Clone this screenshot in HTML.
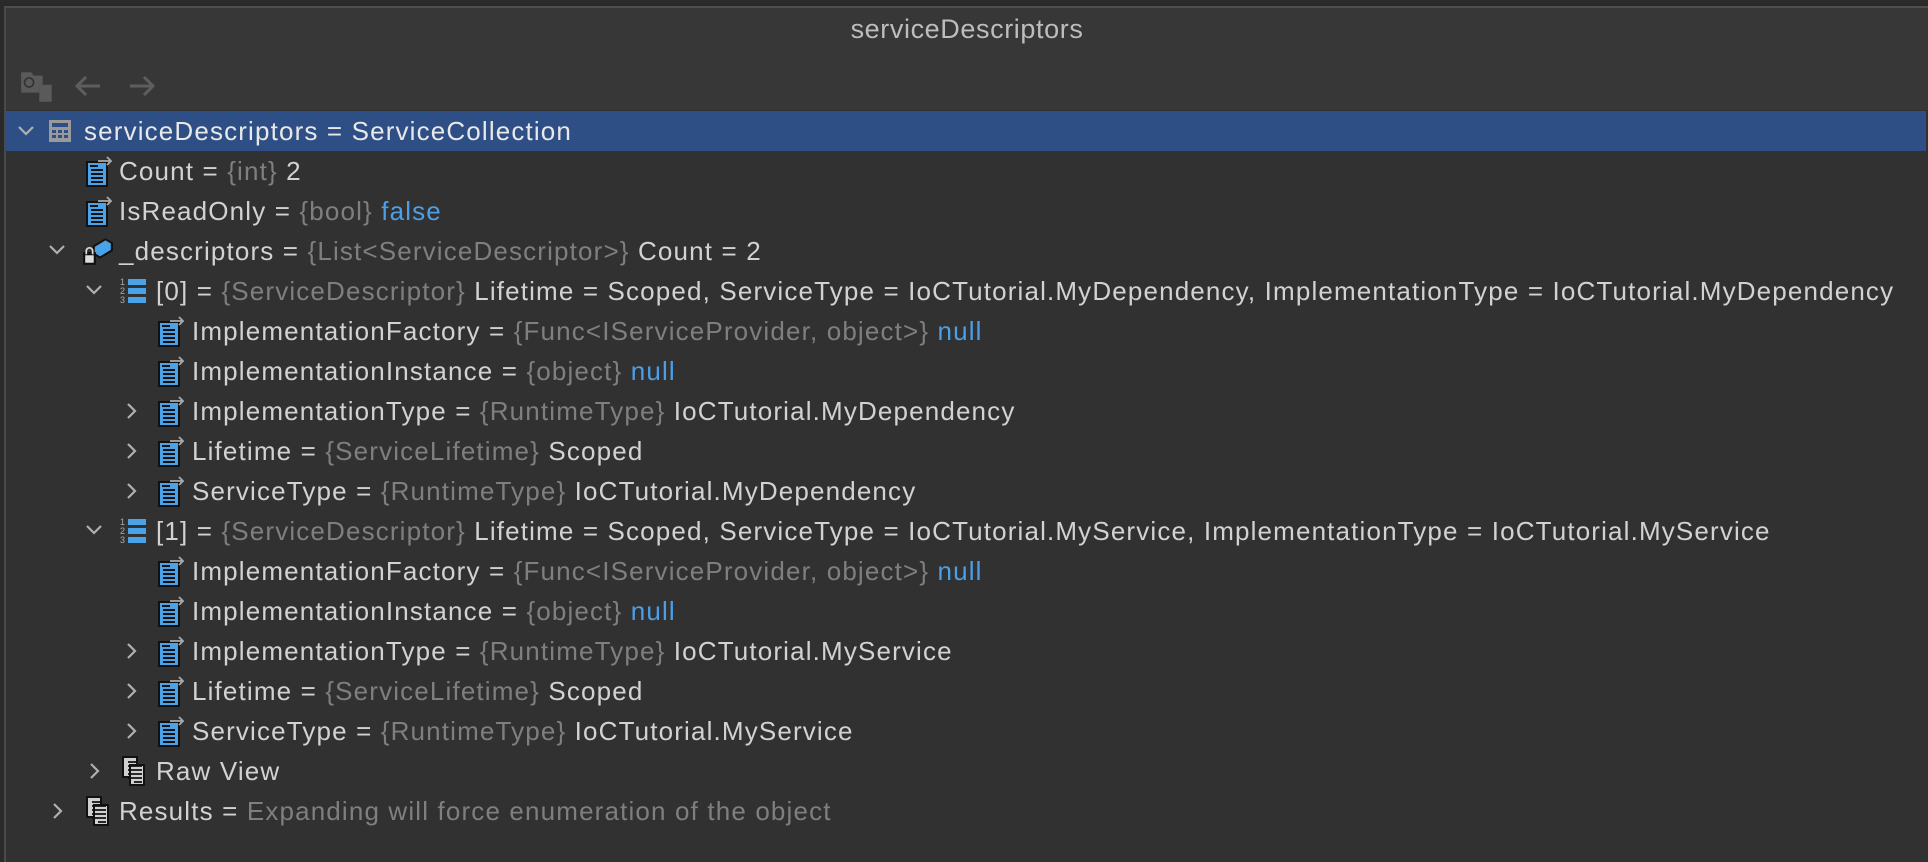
<!DOCTYPE html>
<html><head><meta charset="utf-8"><style>
html,body{margin:0;padding:0;width:1928px;height:862px;overflow:hidden;background:#2a2a2a;}
body{font-family:"Liberation Sans",sans-serif;position:relative;}
#win{position:absolute;left:4px;top:6px;right:0;bottom:0;background:#313131;border-left:2px solid #4a4a4a;border-top:2px solid #4e4e4e;}
#hdr{position:absolute;left:0;top:0;right:0;height:102px;background:#373737;}
#title{position:absolute;left:0;right:0;top:6px;text-align:center;color:#bdbdbd;font-size:27px;letter-spacing:0.6px;}
.row{position:absolute;left:2px;right:2px;height:40px;font-size:26px;line-height:40px;color:#d2d2d2;white-space:nowrap;letter-spacing:1.15px;}
.sel{background:#2e4f85;color:#e8e8e8;}
.t{color:#7f7f7f}.b{color:#4c9fe6}
.chev{position:absolute;top:13px;}
.ic{position:absolute;top:4px;}
.tx{position:absolute;top:0;}
</style></head><body>
<div id="win">
<div id="hdr">
<div id="title">serviceDescriptors</div>
<svg style="position:absolute;left:14px;top:62px" width="34" height="34" viewBox="0 0 30 30"><path d="M1 2h9l2 3h8v8H17v7H1z" fill="#5a5a5a"/><circle cx="8" cy="11" r="4" fill="none" stroke="#333" stroke-width="1.5"/><rect x="17" y="13" width="11" height="15" fill="#5a5a5a"/></svg>
<svg style="position:absolute;left:68px;top:67px" width="28" height="22" viewBox="0 0 28 22"><path d="M26 11H3M12 2L3 11l9 9" fill="none" stroke="#5e5e5e" stroke-width="3"/></svg>
<svg style="position:absolute;left:122px;top:67px" width="28" height="22" viewBox="0 0 28 22"><path d="M2 11h23M16 2l9 9-9 9" fill="none" stroke="#5e5e5e" stroke-width="3"/></svg>
</div>
</div>
<svg width="0" height="0" style="position:absolute">
<defs>
<symbol id="prop" viewBox="0 0 28 32"><rect x="0" y="6" width="22" height="26" fill="#111"/><rect x="2" y="8" width="18" height="22" fill="#4aa3e8"/><rect x="4" y="10" width="8" height="2" fill="#111"/><path d="M5 15h12M5 19h12M5 23h12M5 27h12" stroke="#111" stroke-width="2"/><path d="M12 6h13M21 2l4 4-4 4" fill="none" stroke="#aaa" stroke-width="1.8"/></symbol>
<symbol id="chd" viewBox="0 0 18 12"><path d="M2 2l7 7 7-7" fill="none" stroke="#b0b0b0" stroke-width="2.2"/></symbol>
<symbol id="chr" viewBox="0 0 12 18"><path d="M2 2l7 7-7 7" fill="none" stroke="#b0b0b0" stroke-width="2.2"/></symbol>
<symbol id="arr" viewBox="0 0 28 28"><text x="0" y="8" font-size="9" fill="#aaa" font-family="Liberation Sans">1</text><text x="0" y="17" font-size="9" fill="#aaa" font-family="Liberation Sans">2</text><text x="0" y="26" font-size="9" fill="#aaa" font-family="Liberation Sans">3</text><rect x="8" y="2" width="18" height="6" fill="#4aa3e8"/><rect x="8" y="11" width="18" height="6" fill="#4aa3e8"/><rect x="8" y="20" width="18" height="6" fill="#4aa3e8"/></symbol>
<symbol id="raw" viewBox="0 0 28 32"><rect x="2" y="1" width="16" height="22" fill="#111"/><rect x="4" y="3" width="12" height="18" fill="#d0d0d0"/><rect x="9" y="9" width="16" height="22" fill="#111"/><rect x="11" y="11" width="12" height="18" fill="#d0d0d0"/><path d="M8 7h10M8 11h14M8 15h14M8 19h14M8 23h14M14 27h8" stroke="#111" stroke-width="1.8"/></symbol>
</defs></svg>

<div class="row sel" style="top:111px;left:6px;right:2px">
<svg class="chev" style="left:11px;top:14px" width="18" height="12"><use href="#chd"/></svg>
<svg class="ic" style="left:42px;top:8px" width="24" height="24" viewBox="0 0 24 24"><rect x="1" y="1" width="22" height="22" fill="#9a9a9a"/><rect x="4" y="4" width="16" height="4" fill="#2e4f85"/><path d="M4 11h4v3H4zM10 11h4v3h-4zM16 11h4v3h-4zM4 16h4v3H4zM10 16h4v3h-4zM16 16h4v3h-4z" fill="#2e4f85"/></svg>
<span class="tx" style="left:78px">serviceDescriptors = ServiceCollection</span></div>

<div class="row" style="top:151px"><svg class="ic" style="left:84px" width="28" height="32"><use href="#prop"/></svg><span class="tx" style="left:117px">Count = <span class="t">{int}</span> 2</span></div>
<div class="row" style="top:191px"><svg class="ic" style="left:84px" width="28" height="32"><use href="#prop"/></svg><span class="tx" style="left:117px">IsReadOnly = <span class="t">{bool}</span> <span class="b">false</span></span></div>
<div class="row" style="top:231px"><svg class="chev" style="left:46px" width="18" height="12"><use href="#chd"/></svg>
<svg class="ic" style="left:80px;top:5px" width="32" height="30" viewBox="0 0 30 28"><path d="M10 9l12-7 7 4v8l-12 7-7-4z" fill="#111"/><path d="M12 10l10-6 5 3v6l-10 6-5-3z" fill="#4aa3e8"/><rect x="1" y="15" width="12" height="12" fill="#111"/><rect x="3" y="18" width="8" height="7" fill="#ddd"/><path d="M4 17v-3a3 3 0 0 1 6 0v3" fill="none" stroke="#ddd" stroke-width="1.6"/></svg>
<span class="tx" style="left:117px">_descriptors = <span class="t">{List&lt;ServiceDescriptor&gt;}</span> Count = 2</span></div>

<div class="row" style="top:271px"><svg class="chev" style="left:83px" width="18" height="12"><use href="#chd"/></svg><svg class="ic" style="left:118px;top:6px" width="28" height="28"><use href="#arr"/></svg><span class="tx" style="left:154px">[0] = <span class="t">{ServiceDescriptor}</span> Lifetime = Scoped, ServiceType = IoCTutorial.MyDependency, ImplementationType = IoCTutorial.MyDependency</span></div>
<div class="row" style="top:311px"><svg class="ic" style="left:156px" width="28" height="32"><use href="#prop"/></svg><span class="tx" style="left:190px">ImplementationFactory = <span class="t">{Func&lt;IServiceProvider, object&gt;}</span> <span class="b">null</span></span></div>
<div class="row" style="top:351px"><svg class="ic" style="left:156px" width="28" height="32"><use href="#prop"/></svg><span class="tx" style="left:190px">ImplementationInstance = <span class="t">{object}</span> <span class="b">null</span></span></div>
<div class="row" style="top:391px"><svg class="chev" style="left:124px;top:11px" width="12" height="18"><use href="#chr"/></svg><svg class="ic" style="left:156px" width="28" height="32"><use href="#prop"/></svg><span class="tx" style="left:190px">ImplementationType = <span class="t">{RuntimeType}</span> IoCTutorial.MyDependency</span></div>
<div class="row" style="top:431px"><svg class="chev" style="left:124px;top:11px" width="12" height="18"><use href="#chr"/></svg><svg class="ic" style="left:156px" width="28" height="32"><use href="#prop"/></svg><span class="tx" style="left:190px">Lifetime = <span class="t">{ServiceLifetime}</span> Scoped</span></div>
<div class="row" style="top:471px"><svg class="chev" style="left:124px;top:11px" width="12" height="18"><use href="#chr"/></svg><svg class="ic" style="left:156px" width="28" height="32"><use href="#prop"/></svg><span class="tx" style="left:190px">ServiceType = <span class="t">{RuntimeType}</span> IoCTutorial.MyDependency</span></div>

<div class="row" style="top:511px"><svg class="chev" style="left:83px" width="18" height="12"><use href="#chd"/></svg><svg class="ic" style="left:118px;top:6px" width="28" height="28"><use href="#arr"/></svg><span class="tx" style="left:154px">[1] = <span class="t">{ServiceDescriptor}</span> Lifetime = Scoped, ServiceType = IoCTutorial.MyService, ImplementationType = IoCTutorial.MyService</span></div>
<div class="row" style="top:551px"><svg class="ic" style="left:156px" width="28" height="32"><use href="#prop"/></svg><span class="tx" style="left:190px">ImplementationFactory = <span class="t">{Func&lt;IServiceProvider, object&gt;}</span> <span class="b">null</span></span></div>
<div class="row" style="top:591px"><svg class="ic" style="left:156px" width="28" height="32"><use href="#prop"/></svg><span class="tx" style="left:190px">ImplementationInstance = <span class="t">{object}</span> <span class="b">null</span></span></div>
<div class="row" style="top:631px"><svg class="chev" style="left:124px;top:11px" width="12" height="18"><use href="#chr"/></svg><svg class="ic" style="left:156px" width="28" height="32"><use href="#prop"/></svg><span class="tx" style="left:190px">ImplementationType = <span class="t">{RuntimeType}</span> IoCTutorial.MyService</span></div>
<div class="row" style="top:671px"><svg class="chev" style="left:124px;top:11px" width="12" height="18"><use href="#chr"/></svg><svg class="ic" style="left:156px" width="28" height="32"><use href="#prop"/></svg><span class="tx" style="left:190px">Lifetime = <span class="t">{ServiceLifetime}</span> Scoped</span></div>
<div class="row" style="top:711px"><svg class="chev" style="left:124px;top:11px" width="12" height="18"><use href="#chr"/></svg><svg class="ic" style="left:156px" width="28" height="32"><use href="#prop"/></svg><span class="tx" style="left:190px">ServiceType = <span class="t">{RuntimeType}</span> IoCTutorial.MyService</span></div>

<div class="row" style="top:751px"><svg class="chev" style="left:87px;top:11px" width="12" height="18"><use href="#chr"/></svg><svg class="ic" style="left:118px" width="28" height="32"><use href="#raw"/></svg><span class="tx" style="left:154px">Raw View</span></div>
<div class="row" style="top:791px"><svg class="chev" style="left:50px;top:11px" width="12" height="18"><use href="#chr"/></svg><svg class="ic" style="left:82px" width="28" height="32"><use href="#raw"/></svg><span class="tx" style="left:117px">Results = <span class="t">Expanding will force enumeration of the object</span></span></div>
</body></html>
